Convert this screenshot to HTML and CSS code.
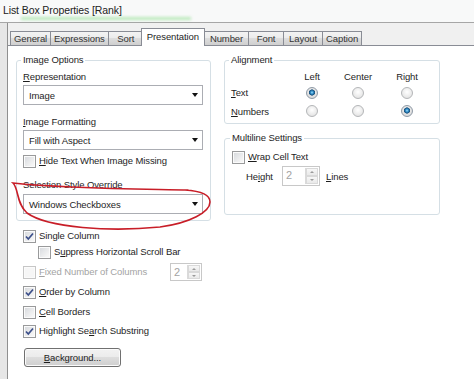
FILE: index.html
```html
<!DOCTYPE html>
<html lang="en">
<head>
    <meta charset="UTF-8">
    <meta name="viewport" content="width=device-width, initial-scale=1.0">
    <title>List Box Properties [Rank]</title>
    <link rel="stylesheet" href="styles.css">
</head>
<body>
    <div class="titlebar">
        <div class="title">List Box Properties [Rank]</div>
        <div class="glow"></div>
    </div>

    <div class="frame">
        <div class="client">
            <div class="tabs">
                <div class="tab">General</div>
                <div class="tab">Expressions</div>
                <div class="tab">Sort</div>
                <div class="tab active">Presentation</div>
                <div class="tab wide">Number</div>
                <div class="tab">Font</div>
                <div class="tab wide">Layout</div>
                <div class="tab">Caption</div>
            </div>

            <div class="panel">
                <!-- Columna izquierda -->
                <div class="col-left">
                    <fieldset class="group image-options">
                        <legend>Image Options</legend>
                        <div class="field-label"><u>R</u>epresentation</div>
                        <div class="select"><span>Image</span><span class="arrow"></span></div>
                        <div class="field-label second"><u>I</u>mage Formatting</div>
                        <div class="select"><span>Fill with Aspect</span><span class="arrow"></span></div>
                        <div class="check hide-text"><span class="box"></span><span><u>H</u>ide Text When Image Missing</span></div>
                        <div class="field-label override">Selection Style Override</div>
                        <div class="select override-select"><span>Windows Checkboxes</span><span class="arrow"></span></div>
                    </fieldset>

                    <div class="check first-check">
                        <span class="box checked"><svg viewBox="0 0 11 11"><path d="M2 5.5 L4.3 8 L9 2.5"/></svg></span>
                        <span>Single Column</span>
                    </div>
                    <div class="check sub">
                        <span class="box"></span>
                        <span>S<u>u</u>ppress Horizontal Scroll Bar</span>
                    </div>
                    <div class="check row-gap disabled">
                        <span class="box"></span>
                        <span class="grow"><u>F</u>ixed Number of Columns</span>
                        <span class="spin small">
                            <span class="spin-val">2</span>
                            <span class="spin-btns"><span class="up"></span><span class="down"></span></span>
                        </span>
                    </div>
                    <div class="check row-gap">
                        <span class="box checked"><svg viewBox="0 0 11 11"><path d="M2 5.5 L4.3 8 L9 2.5"/></svg></span>
                        <span><u>O</u>rder by Column</span>
                    </div>
                    <div class="check row-gap">
                        <span class="box"></span>
                        <span><u>C</u>ell Borders</span>
                    </div>
                    <div class="check last-check">
                        <span class="box checked"><svg viewBox="0 0 11 11"><path d="M2 5.5 L4.3 8 L9 2.5"/></svg></span>
                        <span>Highlight Se<u>a</u>rch Substring</span>
                    </div>

                    <button class="btn"><u>B</u>ackground...</button>
                </div>

                <!-- Columna derecha -->
                <div class="col-right">
                    <fieldset class="group alignment">
                        <legend>Alignment</legend>
                        <div class="align-grid">
                            <span></span>
                            <span class="head">Left</span>
                            <span class="head">Center</span>
                            <span class="head">Right</span>

                            <span class="row-label"><u>T</u>ext</span>
                            <span class="cell"><span class="radio on"></span></span>
                            <span class="cell"><span class="radio"></span></span>
                            <span class="cell"><span class="radio"></span></span>

                            <span class="row-label"><u>N</u>umbers</span>
                            <span class="cell"><span class="radio"></span></span>
                            <span class="cell"><span class="radio"></span></span>
                            <span class="cell"><span class="radio on"></span></span>
                        </div>
                    </fieldset>

                    <fieldset class="group multiline">
                        <legend>Multiline Settings</legend>
                        <div class="check">
                            <span class="box"></span>
                            <span><u>W</u>rap Cell Text</span>
                        </div>
                        <div class="height-row">
                            <span class="height-label">He<u>i</u>ght</span>
                            <span class="spin">
                                <span class="spin-val">2</span>
                                <span class="spin-btns"><span class="up"></span><span class="down"></span></span>
                            </span>
                            <span class="lines"><u>L</u>ines</span>
                        </div>
                    </fieldset>
                </div>
            </div>
        </div>
    </div>

    <svg class="scribble" width="474" height="379" viewBox="0 0 474 379">
        <path d="M188 190 C150 189 70 189 13 183 C19 189 16 203 27 213 C48 228 110 232 160 227 C190 223 210 212 210 202 C210 195 201 191 185 190"/>
    </svg>
</body>
</html>
```

FILE: styles.css
```css
:root {
    --text: #1e1e1e;
    --tab-border: #898c95;
    --group-border: #d5dfe5;
    --disabled: #a3a3a3;
}

* {
    box-sizing: border-box;
}

body {
    margin: 0;
    width: 474px;
    height: 379px;
    overflow: hidden;
    position: relative;
    font-family: 'Liberation Sans', Arial, sans-serif;
    font-size: 9.5px;
    letter-spacing: -0.1px;
    color: var(--text);
    background: #fff;
}

u {
    text-decoration-thickness: 1px;
    text-underline-offset: 1px;
}

/* Barra de título */
.titlebar {
    height: 22px;
    background: #f8f9f9;
    padding: 4px 0 0 3px;
}

.title {
    font-size: 10.5px;
    line-height: 12px;
    color: #222;
}

.glow {
    width: 170px;
    height: 3px;
    margin: 1px 0 0 18px;
    background: rgba(110, 215, 110, 0.45);
    filter: blur(1.5px);
}

.frame {
    border-top: 1px solid #a6a6a6;
    background: #e6e6e6;
    padding-left: 7px;
    height: 357px;
}

.client {
    border-left: 1px solid #8f8f8f;
    background: #f0f0f0;
    height: 100%;
    display: flex;
    flex-direction: column;
}

/* Pestañas */
.tabs {
    display: flex;
    align-items: flex-end;
    padding: 5px 0 0 2px;
}

.tab {
    height: 14px;
    line-height: 13px;
    min-width: 36px;
    padding: 0 3px;
    text-align: center;
    color: #333;
    border: 1px solid var(--tab-border);
    border-bottom: none;
    margin-right: -1px;
    background: linear-gradient(#f3f3f3 0%, #ebebeb 50%, #dddddd 50%, #cfcfcf 100%);
}

.tab.wide {
    padding: 0 5px;
}

.tab.active {
    position: relative;
    z-index: 1;
    height: 18px;
    line-height: 15px;
    margin: 0 -1px -1px -2px;
    padding: 0 5px;
    color: var(--text);
    background: #fff;
}

.panel {
    flex: 1;
    display: flex;
    gap: 13px;
    padding: 8px 0 0 8px;
    border-top: 1px solid var(--tab-border);
    background: #fff;
}

.col-left {
    width: 195px;
}

.col-right {
    width: 216px;
}

/* Marcos de grupo */
.group {
    margin: 0;
    min-width: 0;
    border: 1px solid var(--group-border);
    border-radius: 3px;
}

.group legend {
    line-height: 12px;
    padding: 0 2px;
    margin-left: -2px;
}

.image-options {
    padding: 5px 7px 6px 6px;
}

.field-label {
    line-height: 12px;
    margin-bottom: 2px;
}

.field-label.second {
    margin-top: 11px;
}

.field-label.override {
    margin-top: 12px;
    margin-bottom: 3px;
}

.select {
    height: 20px;
    border: 1px solid #abadb3;
    background: #fff;
    display: flex;
    align-items: center;
    justify-content: space-between;
    padding: 0 4px 0 5px;
}

.arrow {
    width: 0;
    height: 0;
    border-top: 4px solid #111;
    border-left: 3.5px solid transparent;
    border-right: 3.5px solid transparent;
}

/* Casillas */
.check {
    display: flex;
    align-items: center;
    gap: 3px;
    height: 12px;
    line-height: 12px;
}

.box {
    flex: none;
    width: 13px;
    height: 13px;
    border: 1px solid #999a9b;
    background: linear-gradient(135deg, #d5d8dc 0%, #f5f5f5 80%);
    box-shadow: inset 0 0 0 1px #fbfbfb;
    display: flex;
    align-items: center;
    justify-content: center;
}

.box svg {
    width: 11px;
    height: 11px;
}

.box svg path {
    fill: none;
    stroke: #3c4f8a;
    stroke-width: 1.7;
}

.hide-text {
    margin-top: 5px;
}

.first-check {
    margin-top: 9px;
    padding-left: 7px;
}

.check.sub {
    margin-top: 4px;
    padding-left: 22px;
}

.row-gap {
    margin-top: 8px;
    padding-left: 7px;
}

.last-check {
    margin-top: 7px;
    padding-left: 7px;
}

.disabled {
    color: var(--disabled);
}

.disabled .box {
    border-color: #c6c6c6;
    background: #f6f6f6;
}

.grow {
    flex: 1;
}

/* Control de número */
.spin {
    flex: none;
    display: flex;
    width: 38px;
    height: 20px;
    border: 1px solid #c8c8c8;
    background: #fff;
}

.spin.small {
    width: 32px;
    height: 18px;
    margin-right: 9px;
}

.spin-val {
    flex: 1;
    padding-left: 3px;
    font-size: 11px;
    line-height: 17px;
    color: var(--disabled);
}

.spin-btns {
    width: 13px;
    display: flex;
    flex-direction: column;
    border-left: 1px solid #dadada;
    margin: 1px;
}

.spin-btns span {
    flex: 1;
    display: flex;
    align-items: center;
    justify-content: center;
    background: linear-gradient(#f7f7f7, #e9e9e9);
    border: 1px solid #d9d9d9;
}

.spin-btns .up::after,
.spin-btns .down::after {
    content: "";
    border-left: 2px solid transparent;
    border-right: 2px solid transparent;
}

.spin-btns .up::after {
    border-bottom: 2px solid #9a9a9a;
}

.spin-btns .down::after {
    border-top: 2px solid #9a9a9a;
}

.btn {
    display: block;
    margin: 11px 0 0 8px;
    width: 97px;
    height: 19px;
    padding: 0;
    font: inherit;
    color: var(--text);
    letter-spacing: -0.1px;
    border: 1px solid #707070;
    border-radius: 3px;
    background: linear-gradient(#f2f2f2 0%, #ebebeb 50%, #dddddd 50%, #cfcfcf 100%);
    box-shadow: inset 0 0 0 1px #fbfbfb;
}

/* Alineación */
.alignment {
    padding: 5px 6px 8px 6px;
}

.align-grid {
    display: grid;
    grid-template-columns: 61px 40px 52px 46px;
    grid-template-rows: 12px 13px 13px;
    row-gap: 3px;
    align-items: center;
}

.align-grid > span:nth-child(n+9) {
    margin-top: 5px;
}

.head {
    text-align: center;
    line-height: 12px;
}

.cell {
    display: flex;
    justify-content: center;
}

.radio {
    width: 12px;
    height: 12px;
    border-radius: 50%;
    border: 1px solid #b4b6b8;
    background: radial-gradient(circle at 50% 40%, #ffffff 0%, #ececec 55%, #dadada 100%);
}

.radio.on {
    border-color: #8f9aa6;
    background:
        radial-gradient(circle at 50% 45%, #9ee0ff 0, #2d8ac4 1.5px, #1b4f7a 2.8px, transparent 3.4px),
        radial-gradient(circle at 50% 40%, #fdfdfd 0%, #e2e2e2 55%, #cfcfcf 100%);
}

.multiline {
    margin: 8px 0 0;
    padding: 7px 7px 32px 7px;
}

.height-row {
    display: flex;
    align-items: center;
    height: 12px;
    margin-top: 7px;
    padding-left: 14px;
}

.height-label {
    width: 36px;
}

.lines {
    margin-left: 6px;
}

/* Marca roja */
.scribble {
    position: absolute;
    top: 0;
    left: 0;
    pointer-events: none;
}

.scribble path {
    fill: none;
    stroke: #c81e28;
    stroke-width: 1.6;
    stroke-linecap: round;
}
```
